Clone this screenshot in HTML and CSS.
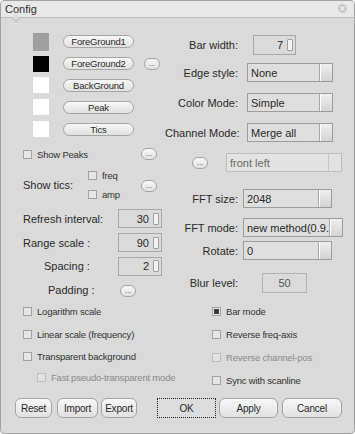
FILE: index.html
```html
<!DOCTYPE html>
<html>
<head>
<meta charset="utf-8">
<title>Config</title>
<link rel="stylesheet" href="styles.css">
</head>
<body>
<div class="win">
  <div class="titlebar">
    <div class="tab">Config</div>
    <div class="close">
      <svg width="9" height="9" viewBox="0 0 9 9"><circle cx="4.5" cy="4.5" r="4.5" fill="#c8c8c8"/><path d="M2.6 2.6 6.4 6.4M6.4 2.6 2.6 6.4" stroke="#f4f4f4" stroke-width="1.3"/></svg>
    </div>
  </div>
  <div class="body">
    <div class="cols">
      <div class="left">
        <div class="crow"><span class="sw gray"></span><span class="btn cbtn">ForeGround1</span></div>
        <div class="crow"><span class="sw black"></span><span class="btn cbtn">ForeGround2</span><span class="btn dots">...</span></div>
        <div class="crow"><span class="sw white"></span><span class="btn cbtn">BackGround</span></div>
        <div class="crow"><span class="sw white"></span><span class="btn cbtn">Peak</span></div>
        <div class="crow"><span class="sw white"></span><span class="btn cbtn">Tics</span></div>

        <div class="prow"><span class="cb"></span><span class="cbl">Show Peaks</span><span class="btn dots">...</span></div>

        <div class="trow">
          <span class="tl">Show tics:</span>
          <div class="tcol">
            <div class="item"><span class="cb"></span><span class="cbl">freq</span></div>
            <div class="item"><span class="cb"></span><span class="cbl">amp</span></div>
          </div>
          <span class="btn dots">...</span>
        </div>

        <div class="srow first"><span class="sl">Refresh interval:</span><div class="spin"><span>30</span><span class="arr"></span></div></div>
        <div class="srow"><span class="sl">Range scale :</span><div class="spin"><span>90</span><span class="arr"></span></div></div>
        <div class="srow"><span class="sl in1">Spacing :</span><div class="spin"><span>2</span><span class="arr"></span></div></div>
        <div class="srow"><span class="sl in2">Padding :</span><span class="btn dots pad">...</span></div>
      </div>

      <div class="right">
        <div class="rrow m17"><span class="rl">Bar width:</span><div class="spin rspin"><span>7</span><span class="arr"></span></div></div>
        <div class="rrow m8"><span class="rl">Edge style:</span><div class="combo c86"><span class="ct">None</span><span class="cbx"></span></div></div>
        <div class="rrow m11"><span class="rl">Color Mode:</span><div class="combo c86"><span class="ct">Simple</span><span class="cbx"></span></div></div>
        <div class="rrow m11"><span class="rl">Channel Mode:</span><div class="combo c86"><span class="ct">Merge all</span><span class="cbx"></span></div></div>
        <div class="rrow m11 chan"><span class="btn dots">...</span><div class="combo dis"><span class="ct">front left</span><span class="cbx"></span></div></div>
        <div class="rrow m17"><span class="rl">FFT size:</span><div class="combo c88"><span class="ct">2048</span><span class="cbx"></span></div></div>
        <div class="rrow m10"><span class="rl">FFT mode:</span><div class="combo c100"><span class="ct">new method(0.9.</span><span class="cbx"></span></div></div>
        <div class="rrow m4"><span class="rl">Rotate:</span><div class="combo c88"><span class="ct">0</span><span class="cbx"></span></div></div>
        <div class="rrow m13"><span class="rl">Blur level:</span><div class="blur">50</div></div>
      </div>
    </div>

    <div class="checks">
      <div class="ccol">
        <div class="ck"><span class="cb"></span><span class="cbl">Logarithm scale</span></div>
        <div class="ck"><span class="cb"></span><span class="cbl">Linear scale (frequency)</span></div>
        <div class="ck h21"><span class="cb"></span><span class="cbl">Transparent background</span></div>
        <div class="ck h20 indent dis"><span class="cb"></span><span class="cbl">Fast pseudo-transparent mode</span></div>
      </div>
      <div class="ccol">
        <div class="ck"><span class="cb on"></span><span class="cbl">Bar mode</span></div>
        <div class="ck"><span class="cb"></span><span class="cbl">Reverse freq-axis</span></div>
        <div class="ck dis"><span class="cb"></span><span class="cbl">Reverse channel-pos</span></div>
        <div class="ck"><span class="cb"></span><span class="cbl">Sync with scanline</span></div>
      </div>
    </div>

    <div class="brow">
      <span class="btn pb w37">Reset</span>
      <span class="btn pb w41 g5">Import</span>
      <span class="btn pb w36 g3">Export</span>
      <span class="btn pb ok w59 g20">OK</span>
      <span class="btn pb w59 g3">Apply</span>
      <span class="btn pb w60 g4">Cancel</span>
    </div>
  </div>
</div>
</body>
</html>
```

FILE: styles.css
```css
* { box-sizing: border-box; }
html, body { margin: 0; padding: 0; background: #ffffff; }
body { font-family: "Liberation Sans", Arial, sans-serif; color: #2a2a2a; }

.win {
  width: 355px; height: 434px;
  border: 1px solid #a2a2a2; border-radius: 4px;
  background: #dadada; overflow: hidden;
  display: flex; flex-direction: column;
}

.titlebar {
  height: 17px; flex: none;
  background: #e8e8e8; border-bottom: 1px solid #bcbcbc;
  display: flex; align-items: center; justify-content: space-between;
}
.tab {
  height: 100%; padding-left: 4px; font-size: 11px; color: #333;
  display: flex; align-items: center; position: relative;
}
.tab::after {
  content: ""; position: absolute; left: 12px; bottom: -4px;
  width: 5px; height: 5px; background: #dadada;
  border-right: 1px solid #bcbcbc; border-bottom: 1px solid #bcbcbc;
  transform: rotate(45deg);
}
.close { width: 9px; height: 9px; margin-right: 7px; margin-top: -2px; display: flex; }

.body { flex: 1; display: flex; flex-direction: column; }
.cols { height: 282px; flex: none; display: flex; }
.left { width: 164px; flex: none; padding-top: 13px; display: flex; flex-direction: column; }
.right { flex: 1; padding-top: 0; display: flex; flex-direction: column; }

/* generic button */
.btn {
  display: flex; align-items: center; justify-content: center;
  border: 1px solid #a4a4a4; border-radius: 7px;
  background: linear-gradient(#f8f8f8, #e0e0e0);
  font-size: 9.5px; letter-spacing: -0.2px; color: #2a2a2a;
  flex: none; white-space: nowrap;
}
.dots {
  width: 16px; height: 12px; border-radius: 6px;
  font-size: 8px; letter-spacing: 0; line-height: 8px;
  align-items: flex-end; padding-bottom: 1px; color: #555;
}

/* colour rows */
.crow { height: 22px; display: flex; align-items: center; padding-left: 32px; }
.sw { width: 16px; height: 16px; flex: none; }
.sw.gray { background: #a0a0a0; height: 18px; }
.sw.black { background: #000000; }
.sw.white { background: #ffffff; }
.cbtn { width: 71px; height: 13px; margin-left: 14px; }
.crow .dots { margin-left: 10px; }

/* checkboxes */
.cb {
  width: 9px; height: 9px; flex: none;
  border: 1px solid #a2a2a2; background: #e5e5e5;
}
.cb.on { display: flex; align-items: center; justify-content: center; }
.cb.on::after { content: ""; width: 5px; height: 5px; background: #3d3d3d; }
.cbl { font-size: 9.5px; letter-spacing: -0.2px; margin-left: 5px; color: #333; white-space: nowrap; }

.prow { height: 21px; margin-top: 4px; display: flex; align-items: center; padding-left: 22px; padding-right: 8px; }
.prow .dots { margin-left: auto; }

.trow { height: 38px; margin-top: 1px; display: flex; align-items: center; padding-left: 22px; padding-right: 8px; }
.tl { width: 65px; flex: none; font-size: 11px; margin-top: 1px; }
.tcol { display: flex; flex-direction: column; }
.tcol .item { height: 19px; display: flex; align-items: center; }
.trow .dots { margin-left: auto; margin-top: 3px; }

/* spin rows */
.srow { height: 20px; margin-top: 4px; display: flex; align-items: center; padding-left: 22px; }
.srow.first { margin-top: 5px; }
.sl { width: 95px; flex: none; font-size: 11px; white-space: nowrap; }
.sl.in1 { padding-left: 21px; }
.sl.in2 { padding-left: 25px; }
.dots.pad { margin-left: 2px; margin-top: 2px; }

.spin {
  width: 44px; height: 19px; flex: none;
  border: 1px solid #a8a8a8;
  display: flex; align-items: center; justify-content: flex-end;
  padding-right: 2px; font-size: 11px; color: #2a2a2a;
}
.spin .arr {
  width: 6px; height: 12px; margin-left: 4px;
  border: 1px solid #9e9e9e; border-radius: 1px; background: #f2f2f2;
}
.rspin { width: 43px; height: 20px; margin-left: 15px; }

/* right column */
.rrow { display: flex; align-items: center; flex: none; }
.rl { width: 73px; flex: none; text-align: right; font-size: 11px; white-space: nowrap; }
.m4 { margin-top: 4px; }
.m8 { margin-top: 8px; }
.m10 { margin-top: 10px; }
.m11 { margin-top: 11px; }
.m13 { margin-top: 13px; }
.m17 { margin-top: 17px; }

.combo {
  height: 19px; flex: none; display: flex;
  border: 1px solid #9c9c9c; background: #dedede; font-size: 11px;
}
.combo .ct {
  flex: 1; padding-left: 3px; display: flex; align-items: center;
  white-space: nowrap; overflow: hidden; min-width: 0;
}
.combo .cbx {
  width: 13px; flex: none;
  border-left: 1px solid #a8a8a8;
  background: linear-gradient(#efefef, #d3d3d3);
  box-shadow: inset 1px 0 #ffffff;
}
.c86 { width: 86px; margin-left: 9px; }
.c88 { width: 89px; margin-left: 5px; }
.c100 { width: 100px; margin-left: 5px; }

.chan { padding-left: 27px; }
.chan .dots { margin-top: 1px; }
.combo.dis {
  width: 116px; margin-left: 18px;
  border-color: #bcbcbc; background: #e2e2e2; color: #6a6a6a;
}
.combo.dis .cbx { background: #e2e2e2; box-shadow: none; border-left-color: #c6c6c6; }

.blur {
  width: 45px; height: 20px; margin-left: 24px; flex: none;
  border: 1px solid #b2b2b2; font-size: 11px; color: #555;
  display: flex; align-items: center; justify-content: center;
}

/* bottom checkbox grid */
.checks { display: grid; grid-template-columns: 189px 1fr; height: 92px; flex: none; }
.ccol { display: flex; flex-direction: column; padding-left: 22px; }
.ck { height: 23px; display: flex; align-items: center; flex: none; }
.ck.h21 { height: 21px; }
.ck.h20 { height: 20px; }
.ck.indent { padding-left: 14px; }
.ck.dis .cbl { color: #8a8a8a; }
.ck.dis .cb { border-color: #bcbcbc; background: #e2e2e2; }

/* dialog buttons */
.brow { display: flex; height: 20px; margin-top: 6px; padding-left: 14px; flex: none; }
.pb { height: 20px; border-radius: 6px; font-size: 10px; }
.pb.ok { border: 1px dotted #222; border-radius: 0; background: #dcdcdc; }
.w36 { width: 36px; }
.w37 { width: 37px; }
.w41 { width: 41px; }
.w59 { width: 59px; }
.w60 { width: 60px; }
.g3 { margin-left: 3px; }
.g4 { margin-left: 4px; }
.g5 { margin-left: 5px; }
.g20 { margin-left: 20px; }
```
